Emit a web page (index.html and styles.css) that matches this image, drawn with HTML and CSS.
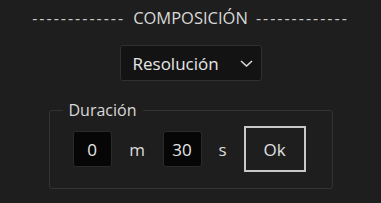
FILE: index.html
```html
<!DOCTYPE html>
<html lang="es">
<head>
<meta charset="utf-8">
<link rel="stylesheet" href="styles.css">
</head>
<body>
<div class="panel">
  <div class="title">
    <span class="dashes">-------------</span>
    <span class="title-text">COMPOSICIÓN</span>
    <span class="dashes">-------------</span>
  </div>
  <div class="select">
    <span class="select-label">Resolución</span>
    <svg class="chev" width="13" height="7" viewBox="0 0 13 7"><path d="M1 1 L6.5 6 L12 1" fill="none" stroke="#d8d8d8" stroke-width="1.6"/></svg>
  </div>
  <fieldset class="group">
    <legend class="legend">Duración</legend>
    <div class="row">
      <div class="num">0</div>
      <span class="unit unit-m">m</span>
      <div class="num">30</div>
      <span class="unit unit-s">s</span>
      <div class="ok">Ok</div>
    </div>
  </fieldset>
</div>
</body>
</html>
```
FILE: styles.css
```css
html, body {
  margin: 0;
  padding: 0;
  background: #1e1e1e;
  width: 381px;
  height: 203px;
  overflow: hidden;
}
.panel {
  font-family: "Open Sans", "Noto Sans", sans-serif;
  font-weight: 500;
  color: #dcdcdc;
  display: flex;
  flex-direction: column;
  align-items: center;
}
.title {
  margin-top: 5px;
  height: 26px;
  line-height: 26px;
  white-space: nowrap;
  display: flex;
  align-items: center;
  gap: 8px;
  color: #d8d8d8;
}
.title-text {
  font-size: 16.5px;
}
.dashes {
  font-size: 16px;
  letter-spacing: 2px;
  width: 94px;
  overflow: hidden;
  color: #c8c8c8;
}
.dashes:first-child {
  text-align: right;
}
.select {
  margin-top: 14px;
  background: #131313;
  border: 1px solid #303030;
  border-radius: 3px;
  display: flex;
  align-items: center;
  justify-content: space-between;
  padding: 0 8px 0 12px;
  box-sizing: border-box;
  width: 142px;
  height: 36px;
}
.select-label {
  font-size: 17px;
  color: #e6e6e6;
}
.chev {
  margin-top: 1px;
}
.group {
  margin: 18px 0 0 0;
  width: 284px;
  box-sizing: border-box;
  border: 1px solid #333;
  border-radius: 3px;
  padding: 0 0 0 23px;
  height: 90px;
}
.legend {
  font-size: 16px;
  padding: 0 6px;
  margin-left: -10px;
  color: #d8d8d8;
}
.row {
  display: flex;
  align-items: center;
  margin-top: 5px;
}
.num {
  width: 39px;
  height: 36px;
  box-sizing: border-box;
  background: #060606;
  border: 1px solid #2a2a2a;
  border-radius: 3px;
  display: flex;
  align-items: center;
  justify-content: center;
  font-size: 17px;
  color: #e6e6e6;
}
.unit {
  font-size: 17px;
  text-align: center;
}
.unit-m {
  width: 51px;
}
.unit-s {
  width: 42px;
}
.ok {
  width: 62px;
  height: 46px;
  box-sizing: border-box;
  border: 2px solid #c8c8c8;
  display: flex;
  align-items: center;
  justify-content: center;
  font-size: 17px;
  color: #e0e0e0;
}
```
